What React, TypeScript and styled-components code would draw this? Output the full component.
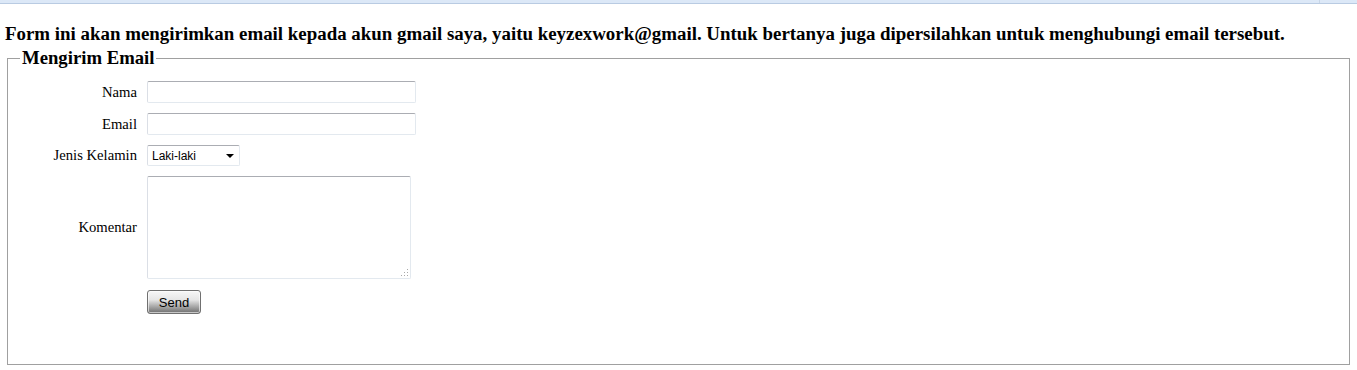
import React from 'react';
import styled, { createGlobalStyle } from 'styled-components';

const GlobalStyle = createGlobalStyle`
    html, body {
        margin: 0;
        padding: 0;
        background: #fff;
        font-family: "Liberation Serif", "Times New Roman", serif;
        color: #000;
    }
`;

const TopBand = styled.div`
    display: flex;
    height: 3px;
    background: #dce8f7;
    border-bottom: 1px solid #b9cbe2;
`;

const BandSegment = styled.div<{ $width?: number }>`
    flex: ${p => (p.$width ? `0 0 ${p.$width}px` : '1')};
    border-right: ${p => (p.$width ? 'none' : '1px solid #c7d5e6')};
`;

const Page = styled.div`
    padding: 0 5px;
`;

const Intro = styled.h3`
    margin: 19px 0 0;
    font-size: 18.9px;
    line-height: 22px;
    font-weight: bold;
    white-space: nowrap;
`;

const Fieldset = styled.fieldset`
    margin: 2px 2px 0;
    padding: 12px 12px 50px;
    border: 1px solid #a0a0a0;
`;

const Legend = styled.legend`
    padding: 0 2px;
    font-size: 18.72px;
    line-height: 22px;
    font-weight: bold;
`;

const FormGrid = styled.div`
    display: grid;
    grid-template-columns: 117px auto;
    column-gap: 10px;
    row-gap: 10px;
    align-items: center;
    justify-items: start;
`;

const Label = styled.label`
    justify-self: end;
    font-size: 14.67px;
    line-height: 17px;
`;

const inputBorders = `
    border: 1px solid #dbdfe6;
    border-top-color: #abadb3;
    border-right-color: #e3e9ef;
    border-bottom-color: #e3e9ef;
    border-radius: 2px;
    background: #fff;
`;

const TextInput = styled.input<{ $width: number }>`
    ${inputBorders}
    box-sizing: border-box;
    width: ${p => p.$width}px;
    height: 22px;
    padding: 1px 3px;
    font: 12px "Liberation Sans", Arial, sans-serif;
    outline: none;
`;

const SelectWrap = styled.div`
    position: relative;
    width: 93px;
    height: 21px;

    &::after {
        content: '';
        position: absolute;
        right: 6px;
        top: 9px;
        border-left: 4px solid transparent;
        border-right: 4px solid transparent;
        border-top: 4px solid #000;
        pointer-events: none;
    }
`;

const Select = styled.select`
    ${inputBorders}
    appearance: none;
    box-sizing: border-box;
    width: 100%;
    height: 100%;
    padding: 0 0 0 4px;
    font: 12px "Liberation Sans", Arial, sans-serif;
    color: #000;
    outline: none;
`;

const TextAreaWrap = styled.div`
    position: relative;
    width: 264px;
    height: 103px;

    /* dotted resize grip in the bottom-right corner */
    &::after {
        content: '';
        position: absolute;
        right: 3px;
        bottom: 3px;
        width: 1px;
        height: 1px;
        background: #a8a8a8;
        box-shadow:
            -3px 0 #a8a8a8, -6px 0 #a8a8a8,
            0 -3px #a8a8a8, -3px -3px #a8a8a8,
            0 -6px #a8a8a8;
        pointer-events: none;
    }
`;

const TextArea = styled.textarea`
    ${inputBorders}
    box-sizing: border-box;
    display: block;
    width: 100%;
    height: 100%;
    padding: 2px;
    resize: none;
    font: 12px "Liberation Sans", Arial, sans-serif;
    outline: none;
`;

const SendButton = styled.button`
    margin-top: 1px;
    box-sizing: border-box;
    width: 54px;
    height: 24px;
    padding: 0;
    border: 1px solid #707070;
    border-radius: 3px;
    background: linear-gradient(to bottom, #f7f7f7 0%, #e6e6e6 40%, #bdbdbd 60%, #6e6e6e 100%);
    box-shadow: inset 0 0 0 1px rgba(255, 255, 255, 0.6);
    font: 13px "Liberation Sans", Arial, sans-serif;
    color: #000;
`;

const App = () => {
    return (
        <>
            <GlobalStyle />
            <TopBand>
                <BandSegment />
                <BandSegment $width={37} />
            </TopBand>
            <Page>
                <Intro>
                    Form ini akan mengirimkan email kepada akun gmail saya, yaitu keyzexwork@gmail. Untuk bertanya juga dipersilahkan untuk menghubungi email tersebut.
                </Intro>
                <Fieldset>
                    <Legend>Mengirim Email</Legend>
                    <FormGrid>
                        <Label htmlFor="nama">Nama</Label>
                        <TextInput id="nama" type="text" $width={269} />

                        <Label htmlFor="email">Email</Label>
                        <TextInput id="email" type="text" $width={269} />

                        <Label htmlFor="jk">Jenis Kelamin</Label>
                        <SelectWrap>
                            <Select id="jk" defaultValue="L">
                                <option value="L">Laki-laki</option>
                                <option value="P">Perempuan</option>
                            </Select>
                        </SelectWrap>

                        <Label htmlFor="komentar">Komentar</Label>
                        <TextAreaWrap>
                            <TextArea id="komentar" />
                        </TextAreaWrap>

                        <span />
                        <SendButton type="button">Send</SendButton>
                    </FormGrid>
                </Fieldset>
            </Page>
        </>
    );
};

export default App;
